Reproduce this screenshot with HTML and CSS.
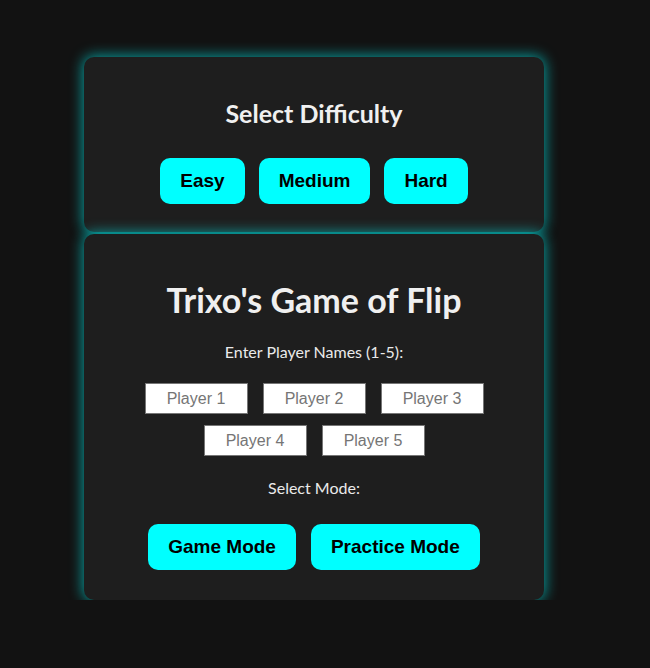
FILE: index.html
```html
<!DOCTYPE html>
<html>
<head>
<meta charset="utf-8">
<link rel="stylesheet" href="styles.css">
</head>
<body>
<div class="wrap">
  <section class="card card-diff">
    <h2 class="title-sm">Select Difficulty</h2>
    <div class="btn-row">
      <button class="btn">Easy</button>
      <button class="btn">Medium</button>
      <button class="btn">Hard</button>
    </div>
  </section>
  <section class="card card-main">
    <h1 class="title-lg">Trixo's Game of Flip</h1>
    <p class="label label-names">Enter Player Names (1-5):</p>
    <div class="inputs">
      <input class="inp" placeholder="Player 1">
      <input class="inp" placeholder="Player 2">
      <input class="inp" placeholder="Player 3">
      <input class="inp" placeholder="Player 4">
      <input class="inp" placeholder="Player 5">
    </div>
    <p class="label label-mode">Select Mode:</p>
    <div class="btn-row mode-row">
      <button class="btn">Game Mode</button>
      <button class="btn">Practice Mode</button>
    </div>
  </section>
</div>
</body>
</html>
```
FILE: styles.css
```css
html, body {
  margin: 0;
  padding: 0;
  background: #121212;
}
body {
  font-family: Lato, "Noto Sans", sans-serif;
  color: #f0f0f0;
}
.wrap {
  width: 460px;
  margin: 57px 0 0 84px;
  display: flex;
  flex-direction: column;
  gap: 2px;
}
.card {
  background: #1e1e1e;
  border-radius: 10px;
  box-shadow: 0 0 14px 1px rgba(0, 255, 255, 0.6);
  display: flex;
  flex-direction: column;
  align-items: center;
  box-sizing: border-box;
}
.card-diff {
  height: 175px;
  padding-top: 40px;
}
.card-main {
  height: 366px;
  padding-top: 45px;
}
.title-sm {
  margin: 0;
  font-size: 25px;
  line-height: 32px;
  font-weight: 700;
}
.title-lg {
  margin: 0;
  font-size: 34px;
  line-height: 42px;
  font-weight: 700;
}
.btn-row {
  display: flex;
  gap: 14px;
  margin-top: 29px;
}
.btn {
  font-family: "Liberation Sans", Arial, sans-serif;
  font-weight: 700;
  font-size: 19px;
  height: 46px;
  padding: 0 20px;
  border: none;
  border-radius: 10px;
  background: #00ffff;
  color: #000;
}
.label {
  margin: 0;
  font-size: 16px;
  line-height: 20px;
  color: #eaeaea;
}
.label-names {
  margin-top: 21px;
}
.inputs {
  margin-top: 21px;
  width: 360px;
  display: flex;
  flex-wrap: wrap;
  justify-content: center;
  column-gap: 15px;
  row-gap: 11px;
}
.inp {
  width: 103px;
  height: 31px;
  box-sizing: border-box;
  border: 1px solid #767676;
  background: #fff;
  font-family: "Liberation Sans", Arial, sans-serif;
  font-size: 16px;
  text-align: center;
  padding: 0;
  margin: 0;
}
.inp::placeholder {
  color: #757575;
}
.label-mode {
  margin-top: 22px;
}
.mode-row {
  margin-top: 26px;
  gap: 15px;
}
```
